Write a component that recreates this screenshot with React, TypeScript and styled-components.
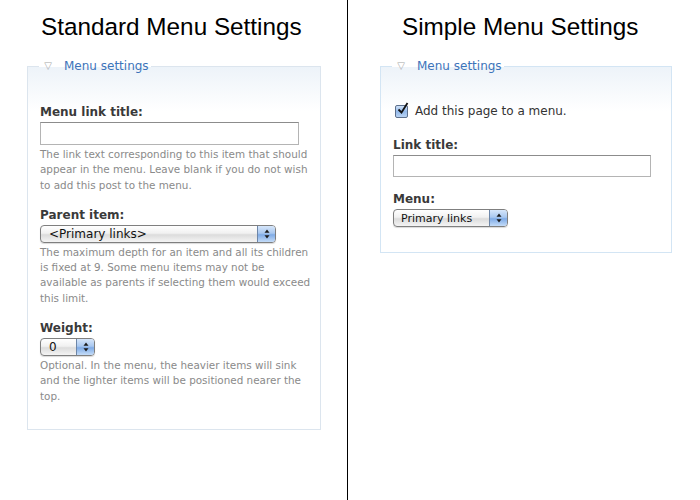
import type { FC } from "react";
import styled, { createGlobalStyle } from "styled-components";

const GlobalStyle = createGlobalStyle`
  html, body {
    margin: 0;
    padding: 0;
    background: #ffffff;
  }
  * {
    box-sizing: border-box;
  }
`;

const Page = styled.div`
  width: 700px;
  height: 500px;
  display: flex;
  background: #ffffff;
  overflow: hidden;
`;

const Column = styled.div<{ $divider?: boolean; $inset: number }>`
  width: ${(p) => (p.$divider ? "348px" : "352px")};
  height: 100%;
  border-right: ${(p) => (p.$divider ? "1px solid #000000" : "none")};
  padding-left: ${(p) => p.$inset}px;
`;

const Title = styled.h1<{ $offset: number }>`
  margin: 11px 0 0 ${(p) => p.$offset}px;
  font-family: "Liberation Sans", Arial, sans-serif;
  font-weight: normal;
  font-size: 24.3px;
  line-height: 32px;
  color: #000000;
`;

const Fieldset = styled.fieldset<{ $width: number; $tone: string; $top: number }>`
  margin: 16px 0 0 0;
  width: ${(p) => p.$width}px;
  padding: ${(p) => p.$top}px 8px 25px 12px;
  border: 1px solid ${(p) => p.$tone};
  background: linear-gradient(to bottom, #edf3f9 0px, #ffffff 44px);
  font-family: "DejaVu Sans", Verdana, sans-serif;
`;

const Legend = styled.legend`
  padding: 0 2px 0 3px;
  margin-left: -1px;
  font-size: 12px;
  line-height: 14px;
  color: #3d74ba;
  display: flex;
  align-items: center;
  gap: 10px;
`;

const Arrow = styled.span`
  color: #a9a9a9;
  font-size: 10px;
  width: 12px;
  text-align: center;
`;

const FormItem = styled.div<{ $gap?: number }>`
  margin-bottom: ${(p) => p.$gap ?? 14}px;
`;

const Label = styled.label`
  display: block;
  font-weight: bold;
  font-size: 12px;
  line-height: 16px;
  color: #3a3a3a;
  margin-bottom: 2px;
`;

const TextInput = styled.input<{ $width: number; $height: number }>`
  display: block;
  width: ${(p) => p.$width}px;
  height: ${(p) => p.$height}px;
  margin: 0;
  border: 1px solid #b4b4b4;
  border-top-color: #8c8c8c;
  background: #ffffff;
  outline: none;
`;

const Description = styled.div`
  margin-top: 2px;
  font-size: 10.4px;
  line-height: 15.3px;
  color: #8a8a8a;
`;

const SelectBox = styled.div<{ $width: number; $height: number; $size: number }>`
  display: flex;
  align-items: stretch;
  width: ${(p) => p.$width}px;
  height: ${(p) => p.$height}px;
  margin: 2px 0 0 0;
  border: 1px solid #7f7f7f;
  border-radius: 4px;
  overflow: hidden;
  background: linear-gradient(to bottom, #ffffff 0%, #f1f1f1 45%, #dcdcdc 55%, #f4f4f4 100%);
  box-shadow: 0 1px 1px rgba(0, 0, 0, 0.15);
  font-size: ${(p) => p.$size}px;
  color: #111111;
`;

const SelectText = styled.span<{ $pad: number }>`
  flex: 1;
  display: flex;
  align-items: center;
  padding-left: ${(p) => p.$pad}px;
  white-space: nowrap;
`;

const Stepper = styled.span`
  width: 18px;
  border-left: 1px solid #6d86a8;
  background: linear-gradient(to bottom, #d6e6fa 0%, #a9c8f0 45%, #7fabe6 55%, #c4dcf8 100%);
  display: flex;
  align-items: center;
  justify-content: center;
`;

const CheckRow = styled.div`
  display: flex;
  align-items: center;
  gap: 7px;
  margin: 2px 0 18px 2px;
  font-size: 12px;
  line-height: 16px;
  color: #333333;
`;

const CheckBox = styled.span`
  width: 13px;
  height: 13px;
  border: 1px solid #5c6f8c;
  border-radius: 2px;
  background: linear-gradient(to bottom, #cfe1f7 0%, #93b9ea 50%, #b9d3f3 100%);
  position: relative;
  flex-shrink: 0;
`;

const StepperIcon: FC = () => (
  <svg width="6" height="10" viewBox="0 0 6 10">
    <path d="M3 0.5 L5.5 3.8 L0.5 3.8 Z" fill="#1b1b1b" />
    <path d="M3 9.5 L5.5 6.2 L0.5 6.2 Z" fill="#1b1b1b" />
  </svg>
);

const Select: FC<{ value: string; width: number; height: number; size: number; pad: number }> = ({
  value,
  width,
  height,
  size,
  pad,
}) => (
  <SelectBox $width={width} $height={height} $size={size}>
    <SelectText $pad={pad}>{value}</SelectText>
    <Stepper>
      <StepperIcon />
    </Stepper>
  </SelectBox>
);

const CheckMark: FC = () => (
  <svg
    width="14"
    height="14"
    viewBox="0 0 14 14"
    style={{ position: "absolute", left: 0, top: -4 }}
  >
    <path d="M2.5 7.5 L5.5 10.5 L11.5 1" stroke="#111" strokeWidth="1.8" fill="none" />
  </svg>
);

const MenuLegend: FC = () => (
  <Legend>
    <Arrow>▽</Arrow>
    Menu settings
  </Legend>
);

const App: FC = () => (
  <>
    <GlobalStyle />
    <Page>
      <Column $divider $inset={27}>
        <Title $offset={14}>Standard Menu Settings</Title>
        <Fieldset $width={294} $tone="#dce5ee" $top={31}>
          <MenuLegend />
          <FormItem>
            <Label>Menu link title:</Label>
            <TextInput $width={259} $height={23} />
            <Description>
              The link text corresponding to this item that should appear in the menu. Leave
              blank if you do not wish to add this post to the menu.
            </Description>
          </FormItem>
          <FormItem>
            <Label>Parent item:</Label>
            <Select value="<Primary links>" width={236} height={18} size={12} pad={8} />
            <Description>
              The maximum depth for an item and all its children is fixed at 9. Some menu items
              may not be available as parents if selecting them would exceed this limit.
            </Description>
          </FormItem>
          <FormItem $gap={0}>
            <Label>Weight:</Label>
            <Select value="0" width={55} height={18} size={12} pad={8} />
            <Description>
              Optional. In the menu, the heavier items will sink and the lighter items will be
              positioned nearer the top.
            </Description>
          </FormItem>
        </Fieldset>
      </Column>
      <Column $inset={32}>
        <Title $offset={22}>Simple Menu Settings</Title>
        <Fieldset $width={292} $tone="#d3e5f4" $top={28}>
          <MenuLegend />
          <CheckRow>
            <CheckBox>
              <CheckMark />
            </CheckBox>
            Add this page to a menu.
          </CheckRow>
          <FormItem>
            <Label>Link title:</Label>
            <TextInput $width={258} $height={22} />
          </FormItem>
          <FormItem $gap={0}>
            <Label>Menu:</Label>
            <Select value="Primary links" width={115} height={18} size={11} pad={7} />
          </FormItem>
        </Fieldset>
      </Column>
    </Page>
  </>
);

export default App;
